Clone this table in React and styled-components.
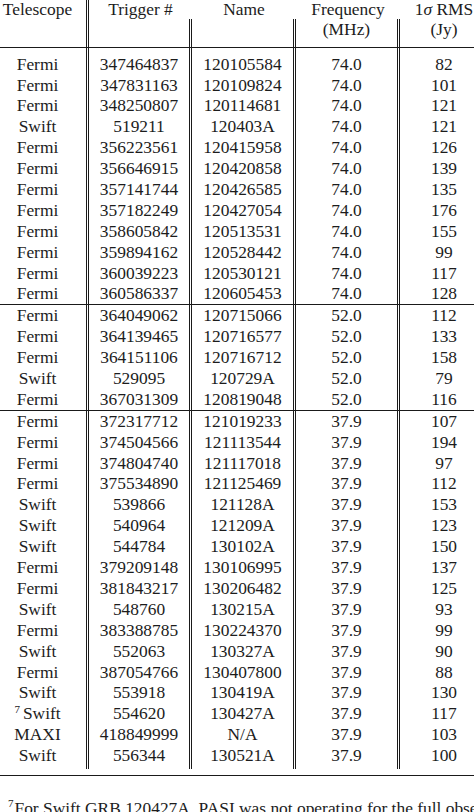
import React from 'react';
import styled, { createGlobalStyle } from 'styled-components';

const GlobalStyle = createGlobalStyle`
  html, body {
    margin: 0;
    padding: 0;
    background: #ffffff;
    overflow: hidden;
  }
  body {
    font-family: "Liberation Serif", "Times New Roman", serif;
    color: #1c1c1c;
  }
`;

const Page = styled.div`
  width: 474px;
  height: 812px;
  overflow: hidden;
  font-size: 17.4px;
`;

const Table = styled.div`
  width: 499px;
  margin-left: -11px;
`;

const Row = styled.div`
  display: grid;
  grid-template-columns: 100px 103px 104px 104px 88px;
  height: ${p => p.$h ?? 20.9}px;
  line-height: ${p => p.$lh ?? 20.9}px;
  border-top: ${p => (p.$rule ? '1px solid #1a1a1a' : 'none')};
  border-bottom: ${p => (p.$bottom ? '1px solid #1a1a1a' : 'none')};
`;

const Cell = styled.div`
  text-align: center;
  white-space: nowrap;
  padding-right: ${p => (p.$line ? '3px' : '0')};
  background: ${p =>
    p.$line
      ? 'linear-gradient(to right, #1a1a1a 0 1px, transparent 1px 2px, #1a1a1a 2px 3px) right top / 3px 100% no-repeat'
      : 'none'};
`;

const Sup = styled.sup`
  font-size: 11px;
  line-height: 0;
  vertical-align: 6px;
  margin-right: 3px;
`;

const Sigma = styled.i`
  font-style: italic;
`;

const Footnote = styled.div`
  margin-top: 22px;
  padding-left: 8px;
  line-height: 21px;
  white-space: nowrap;
`;

const FootMark = styled.sup`
  font-size: 11px;
  line-height: 0;
  vertical-align: 7px;
  margin-right: 1px;
`;

const groups = [
  {
    freq: '74.0',
    rows: [
      ['Fermi', '347464837', '120105584', '82'],
      ['Fermi', '347831163', '120109824', '101'],
      ['Fermi', '348250807', '120114681', '121'],
      ['Swift', '519211', '120403A', '121'],
      ['Fermi', '356223561', '120415958', '126'],
      ['Fermi', '356646915', '120420858', '139'],
      ['Fermi', '357141744', '120426585', '135'],
      ['Fermi', '357182249', '120427054', '176'],
      ['Fermi', '358605842', '120513531', '155'],
      ['Fermi', '359894162', '120528442', '99'],
      ['Fermi', '360039223', '120530121', '117'],
      ['Fermi', '360586337', '120605453', '128'],
    ],
  },
  {
    freq: '52.0',
    rows: [
      ['Fermi', '364049062', '120715066', '112'],
      ['Fermi', '364139465', '120716577', '133'],
      ['Fermi', '364151106', '120716712', '158'],
      ['Swift', '529095', '120729A', '79'],
      ['Fermi', '367031309', '120819048', '116'],
    ],
  },
  {
    freq: '37.9',
    rows: [
      ['Fermi', '372317712', '121019233', '107'],
      ['Fermi', '374504566', '121113544', '194'],
      ['Fermi', '374804740', '121117018', '97'],
      ['Fermi', '375534890', '121125469', '112'],
      ['Swift', '539866', '121128A', '153'],
      ['Swift', '540964', '121209A', '123'],
      ['Swift', '544784', '130102A', '150'],
      ['Fermi', '379209148', '130106995', '137'],
      ['Fermi', '381843217', '130206482', '125'],
      ['Swift', '548760', '130215A', '93'],
      ['Fermi', '383388785', '130224370', '99'],
      ['Swift', '552063', '130327A', '90'],
      ['Fermi', '387054766', '130407800', '88'],
      ['Swift', '553918', '130419A', '130'],
      ['Swift', '554620', '130427A', '117', '7'],
      ['MAXI', '418849999', 'N/A', '103'],
      ['Swift', '556344', '130521A', '100'],
    ],
  },
];

const LinedRow = ({ h, rule }) => (
  <Row $h={h} $rule={rule}>
    <Cell $line />
    <Cell $line />
    <Cell $line />
    <Cell $line />
    <Cell />
  </Row>
);

export default function App() {
  return (
    <Page>
      <GlobalStyle />
      <Table>
        <Row $h={18.6} $lh={18.6}>
          <Cell $line>Telescope</Cell>
          <Cell>Trigger #</Cell>
          <Cell>Name</Cell>
          <Cell>Frequency</Cell>
          <Cell>
            1<Sigma>σ</Sigma> RMS
          </Cell>
        </Row>
        <Row $h={28.4} $lh={21}>
          <Cell $line />
          <Cell $line />
          <Cell $line />
          <Cell $line>(MHz)</Cell>
          <Cell>(Jy)</Cell>
        </Row>
        <LinedRow h={5.7} rule />

        {groups.map((g, gi) =>
          g.rows.map(([tel, trig, name, rms, note], ri) => (
            <Row key={`${gi}-${ri}`} $rule={gi > 0 && ri === 0}>
              <Cell $line>
                {note && <Sup>{note}</Sup>}
                {tel}
              </Cell>
              <Cell $line>{trig}</Cell>
              <Cell $line>{name}</Cell>
              <Cell $line>{g.freq}</Cell>
              <Cell>{rms}</Cell>
            </Row>
          ))
        )}

        <LinedRow h={2.7} />
        <Row $h={6} $bottom />
      </Table>

      <Footnote>
        <FootMark>7</FootMark>For Swift GRB 120427A, PASI was not operating for the full observation.
      </Footnote>
    </Page>
  );
}
